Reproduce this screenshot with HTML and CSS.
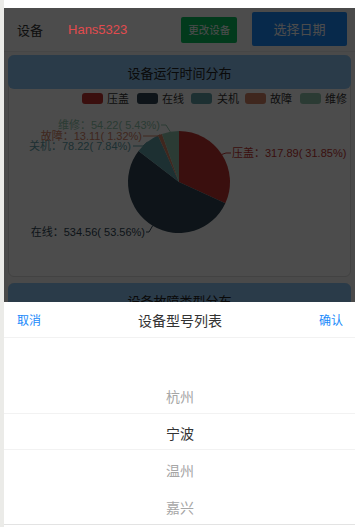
FILE: index.html
```html
<!DOCTYPE html>
<html lang="zh">
<head>
<meta charset="utf-8">
<title>设备</title>
<link rel="stylesheet" href="styles.css">
</head>
<body>
<div class="frame">
  <div class="gutter"></div>
  <div class="screen">
    <div class="topgap"></div>
    <div class="app">
      <div class="header">
        <div class="head-left">
          <span class="label">设备</span>
          <span class="device">Hans5323</span>
          <span class="btn-green">更改设备</span>
        </div>
        <div class="head-right">
          <span class="btn-blue">选择日期</span>
        </div>
      </div>

      <div class="card">
        <div class="card-title">设备运行时间分布</div>
        <svg class="chart" width="342" height="188" viewBox="0 0 342 188">
          <g class="legend" font-size="11" fill="#333">
            <rect x="74" y="5" width="21" height="11" rx="3" fill="#c23531"/>
            <text x="99" y="14.5">压盖</text>
            <rect x="129" y="5" width="21" height="11" rx="3" fill="#2f4554"/>
            <text x="154" y="14.5">在线</text>
            <rect x="183" y="5" width="21" height="11" rx="3" fill="#61a0a8"/>
            <text x="209" y="14.5">关机</text>
            <rect x="237" y="5" width="21" height="11" rx="3" fill="#d48265"/>
            <text x="262" y="14.5">故障</text>
            <rect x="292" y="5" width="21" height="11" rx="3" fill="#91c7ae"/>
            <text x="317" y="14.5">维修</text>
          </g>
          <g class="pie">
            <path d="M171 94 L171 43 A51 51 0 0 1 217.35 115.28 Z" fill="#c23531"/>
            <path d="M171 94 L217.35 115.28 A51 51 0 1 1 130.54 62.96 Z" fill="#2f4554"/>
            <path d="M171 94 L130.54 62.96 A51 51 0 0 1 150.01 47.52 Z" fill="#61a0a8"/>
            <path d="M171 94 L150.01 47.52 A51 51 0 0 1 153.93 45.94 Z" fill="#d48265"/>
            <path d="M171 94 L153.93 45.94 A51 51 0 0 1 171 43 Z" fill="#91c7ae"/>
          </g>
          <g class="lines" fill="none" stroke-width="1">
            <polyline points="213.9,66.4 218,65 223,65" stroke="#c23531"/>
            <polyline points="144.7,137.7 141,144 138,144" stroke="#2f4554"/>
            <polyline points="139.3,54 135,58 125,58" stroke="#61a0a8"/>
            <polyline points="151.9,46.7 150,48 135,48" stroke="#d48265"/>
            <polyline points="162.3,43.8 158,37 153,37" stroke="#91c7ae"/>
          </g>
          <g class="labels" font-size="11">
            <text x="224" y="69" fill="#c23531">压盖：317.89( 31.85%)</text>
            <text x="137" y="148" text-anchor="end" fill="#2f4554">在线：534.56( 53.56%)</text>
            <text x="123" y="62" text-anchor="end" fill="#61a0a8">关机：78.22( 7.84%)</text>
            <text x="134" y="51.5" text-anchor="end" fill="#d48265">故障：13.11( 1.32%)</text>
            <text x="152" y="41" text-anchor="end" fill="#91c7ae">维修：54.22( 5.43%)</text>
          </g>
        </svg>
      </div>

      <div class="card">
        <div class="card-title">设备故障类型分布</div>
        <div class="chart-empty"></div>
      </div>

      <div class="overlay"></div>

      <div class="sheet">
        <div class="sheet-head">
          <span class="sheet-btn">取消</span>
          <span class="sheet-title">设备型号列表</span>
          <span class="sheet-btn">确认</span>
        </div>
        <div class="picker">
          <div class="picker-list">
            <div class="picker-item">杭州</div>
            <div class="picker-item selected">宁波</div>
            <div class="picker-item">温州</div>
            <div class="picker-item">嘉兴</div>
          </div>
          <div class="picker-frame"></div>
        </div>
      </div>
    </div>
  </div>
</div>
</body>
</html>
```

FILE: styles.css
```css
* { box-sizing: border-box; }
html, body {
  margin: 0;
  padding: 0;
  background: #fff;
  font-family: "Liberation Sans", "Noto Sans CJK SC", sans-serif;
}
.frame {
  display: flex;
  width: 355px;
  height: 527px;
  overflow: hidden;
}
.gutter {
  width: 4px;
  flex: none;
  background: #ebebe8;
}
.screen {
  flex: 1;
  display: flex;
  flex-direction: column;
}
.topgap {
  height: 8px;
  flex: none;
  background: #fff;
}
.app {
  position: relative;
  height: 517px;
  flex: none;
  background: #f7f7f7;
  border-bottom: 1px solid #e3e3e3;
  overflow: hidden;
}
.header {
  display: flex;
  height: 44px;
  border-bottom: 1px solid #ececec;
}
.head-left {
  width: 246px;
  display: flex;
  align-items: center;
  background: #fff;
  padding-left: 13px;
}
.label {
  font-size: 13px;
  color: #333;
}
.device {
  position: relative;
  z-index: 5;
  margin-left: 25px;
  font-size: 13px;
  color: #e24b4e;
}
.btn-green {
  margin-left: 54px;
  width: 56px;
  height: 26px;
  display: flex;
  align-items: center;
  justify-content: center;
  background: #07c160;
  color: #fff;
  font-size: 10.5px;
  border-radius: 2px;
}
.head-right {
  flex: 1;
  display: flex;
  align-items: center;
  padding-left: 2px;
}
.btn-blue {
  width: 95px;
  height: 34px;
  margin-top: -2px;
  display: flex;
  align-items: center;
  justify-content: center;
  background: #1989fa;
  color: #fff;
  font-size: 13px;
  border-radius: 2px;
}
.card {
  margin: 3px 5px 0 4px;
  background: #fff;
  border: 1px solid #dcdcdc;
  border-radius: 6px;
}
.card + .card { margin-top: 6px; }
.card-title {
  height: 34px;
  margin: -1px;
  display: flex;
  align-items: center;
  justify-content: center;
  background: #8ec6f5;
  border-radius: 6px;
  font-size: 13px;
  color: #222;
}
.chart {
  display: block;
  margin-left: -1px;
  font-family: "Liberation Sans", "Noto Sans CJK SC", sans-serif;
}
.chart-empty { height: 200px; }
.overlay {
  position: absolute;
  inset: 0;
  background: rgba(0, 0, 0, 0.7);
  z-index: 2;
}
.sheet {
  position: absolute;
  left: 0;
  right: 0;
  bottom: 0;
  height: 222px;
  background: #fff;
  z-index: 3;
  display: flex;
  flex-direction: column;
}
.sheet-head {
  height: 36px;
  flex: none;
  display: flex;
  align-items: center;
  justify-content: space-between;
  padding: 0 13px;
  border-bottom: 1px solid #f2f2f2;
}
.sheet-btn {
  font-size: 12px;
  color: #1989fa;
}
.sheet-title {
  font-size: 14px;
  color: #333;
}
.picker {
  position: relative;
  flex: 1;
}
.picker-list {
  padding-top: 39px;
}
.picker-item {
  height: 37px;
  display: flex;
  align-items: center;
  justify-content: center;
  font-size: 14px;
  color: #a6a6a6;
}
.picker-item.selected { color: #333; }
.picker-frame {
  position: absolute;
  left: 0;
  right: 0;
  top: 75px;
  height: 37px;
  border-top: 1px solid #f2f2f2;
  border-bottom: 1px solid #f2f2f2;
  pointer-events: none;
}
```
